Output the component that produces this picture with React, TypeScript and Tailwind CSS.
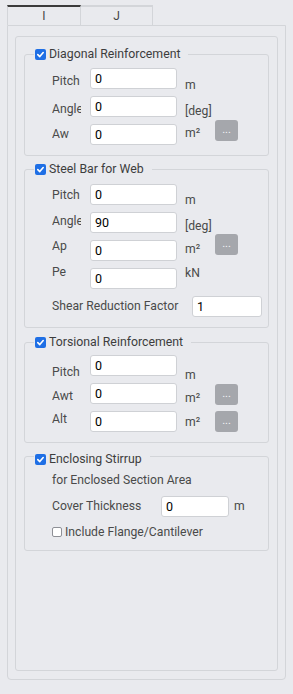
import { ReactNode } from 'react';

const font = { fontFamily: 'Roboto, "Noto Sans", sans-serif' };

function Check({ on }: { on: boolean }) {
  if (!on) {
    return <span className="inline-block w-[10px] h-[10px] rounded-[2px] border border-[#8e9096] bg-white shrink-0" />;
  }
  return (
    <span className="inline-flex w-[11px] h-[11px] rounded-[2px] bg-[#1f6fe5] items-center justify-center shrink-0">
      <svg width="9" height="9" viewBox="0 0 10 10">
        <path d="M2 5.2 L4.2 7.3 L8 2.8" fill="none" stroke="white" strokeWidth="1.8" strokeLinecap="round" strokeLinejoin="round" />
      </svg>
    </span>
  );
}

function DotsButton({ cls }: { cls: string }) {
  return (
    <div className={`w-[23px] h-[21px] rounded-[3px] bg-[#a5a7ac] flex items-center justify-center text-[#f4f5f7] text-[11px] leading-none pb-[2px] ${cls}`}>
      ...
    </div>
  );
}

function Input({ value, cls }: { value: string; cls: string }) {
  return (
    <div className={`h-[21px] bg-white border border-[#cfd1d5] rounded-[3px] px-[4px] text-[12.5px] leading-[19px] text-black ${cls}`}>
      {value}
    </div>
  );
}

interface RowProps {
  label: string;
  value: string;
  unit: string;
  lt: string;
  ut: string;
  btn?: string;
}

function Row({ label, value, unit, lt, ut, btn }: RowProps) {
  return (
    <div className="flex items-start h-[21px]">
      <div className={`w-[29px] mr-[9px] overflow-hidden whitespace-nowrap leading-[16px] ${lt}`}>{label}</div>
      <Input value={value} cls="w-[87px]" />
      <div className={`w-[38px] pl-[8px] leading-[16px] ${ut}`}>{unit}</div>
      {btn && <DotsButton cls={btn} />}
    </div>
  );
}

function Group({ title, cls, body, legendCls, children }: { title: string; cls: string; body: string; legendCls?: string; children: ReactNode }) {
  return (
    <fieldset className={`border border-[#d3d5d9] rounded-[3px] ${cls}`}>
      <legend className={`ml-[9px] pl-[1px] pr-[8px] h-[16px] ${legendCls ?? ''}`}>
        <span className="flex items-center gap-[3px] text-[12.3px] leading-[16px] text-[#3d3d3d]">
          <Check on />
          <span>{title}</span>
        </span>
      </legend>
      <div className={`pl-[27px] ${body}`}>{children}</div>
    </fieldset>
  );
}

export default function App() {
  return (
    <div className="w-[293px] h-[694px] bg-[#e9eaee] pt-[5px] px-[7px] text-[12.2px] text-[#4a4a4a]" style={font}>
      <div className="flex h-[20px]">
        <div className="w-[74px] border-t-2 border-t-[#3c3c3c] border-l border-r border-[#d3d5d9] flex items-center justify-center text-[12px] text-[#444]">I</div>
        <div className="w-[72px] border-t-2 border-t-[#d3d5d9] border-r border-[#d3d5d9] flex items-center justify-center text-[12px] text-[#444]">J</div>
      </div>

      <div className="w-[279px] h-[655px] border border-[#d3d5d9] rounded-b-[4px] px-[7px] pt-[10px]">
        <div className="h-[635px] border border-[#d3d5d9] rounded-[3px] px-[8px] pt-[9px]">
          <Group title="Diagonal Reinforcement" cls="" body="pt-[6px] pb-[10px]">
            <div className="flex flex-col gap-[7px]">
              <Row label="Pitch" value="0" unit="m" lt="mt-[5px]" ut="mt-[9px]" />
              <Row label="Angle" value="0" unit="[deg]" lt="mt-[5px]" ut="mt-[7px]" />
              <Row label="Aw" value="0" unit="m²" lt="mt-[2px]" ut="mt-[1px]" btn="mt-[-4px]" />
            </div>
          </Group>

          <Group title="Steel Bar for Web" cls="mt-[5px]" body="pt-[7px] pb-[11px]">
            <div className="flex flex-col gap-[7px]">
              <Row label="Pitch" value="0" unit="m" lt="mt-[3px]" ut="mt-[8px]" />
              <Row label="Angle" value="90" unit="[deg]" lt="mt-[1px]" ut="mt-[6px]" />
              <Row label="Ap" value="0" unit="m²" lt="mt-[-2px]" ut="mt-[1px]" btn="mt-[-6px]" />
              <Row label="Pe" value="0" unit="kN" lt="mt-[-4px]" ut="mt-[-3px]" />
              <div className="flex items-center h-[20px]">
                <div className="w-[140px] whitespace-nowrap">Shear Reduction Factor</div>
                <Input value="1" cls="w-[70px] h-[20px] leading-[18px]" />
              </div>
            </div>
          </Group>

          <Group title="Torsional Reinforcement" cls="mt-[6px]" body="pt-[5px] pb-[10px]">
            <div className="flex flex-col gap-[7px]">
              <Row label="Pitch" value="0" unit="m" lt="mt-[9px]" ut="mt-[12px]" />
              <Row label="Awt" value="0" unit="m²" lt="mt-[5px]" ut="mt-[7px]" btn="mt-[1px]" />
              <Row label="Alt" value="0" unit="m²" lt="mt-[0px]" ut="mt-[3px]" btn="mt-[0px]" />
            </div>
          </Group>

          <Group title="Enclosing Stirrup" cls="mt-[5px]" body="pt-[8px] pb-[10px]" legendCls="relative top-[3px]">
            <div className="leading-[16px]">for Enclosed Section Area</div>
            <div className="flex items-center h-[20px] mt-[8px]">
              <div className="w-[109px] whitespace-nowrap">Cover Thickness</div>
              <Input value="0" cls="w-[68px] h-[20px] leading-[18px]" />
              <div className="pl-[5px]">m</div>
            </div>
            <div className="flex items-center gap-[3px] mt-[8px] leading-[16px]">
              <Check on={false} />
              <span>Include Flange/Cantilever</span>
            </div>
          </Group>
        </div>
      </div>
    </div>
  );
}
